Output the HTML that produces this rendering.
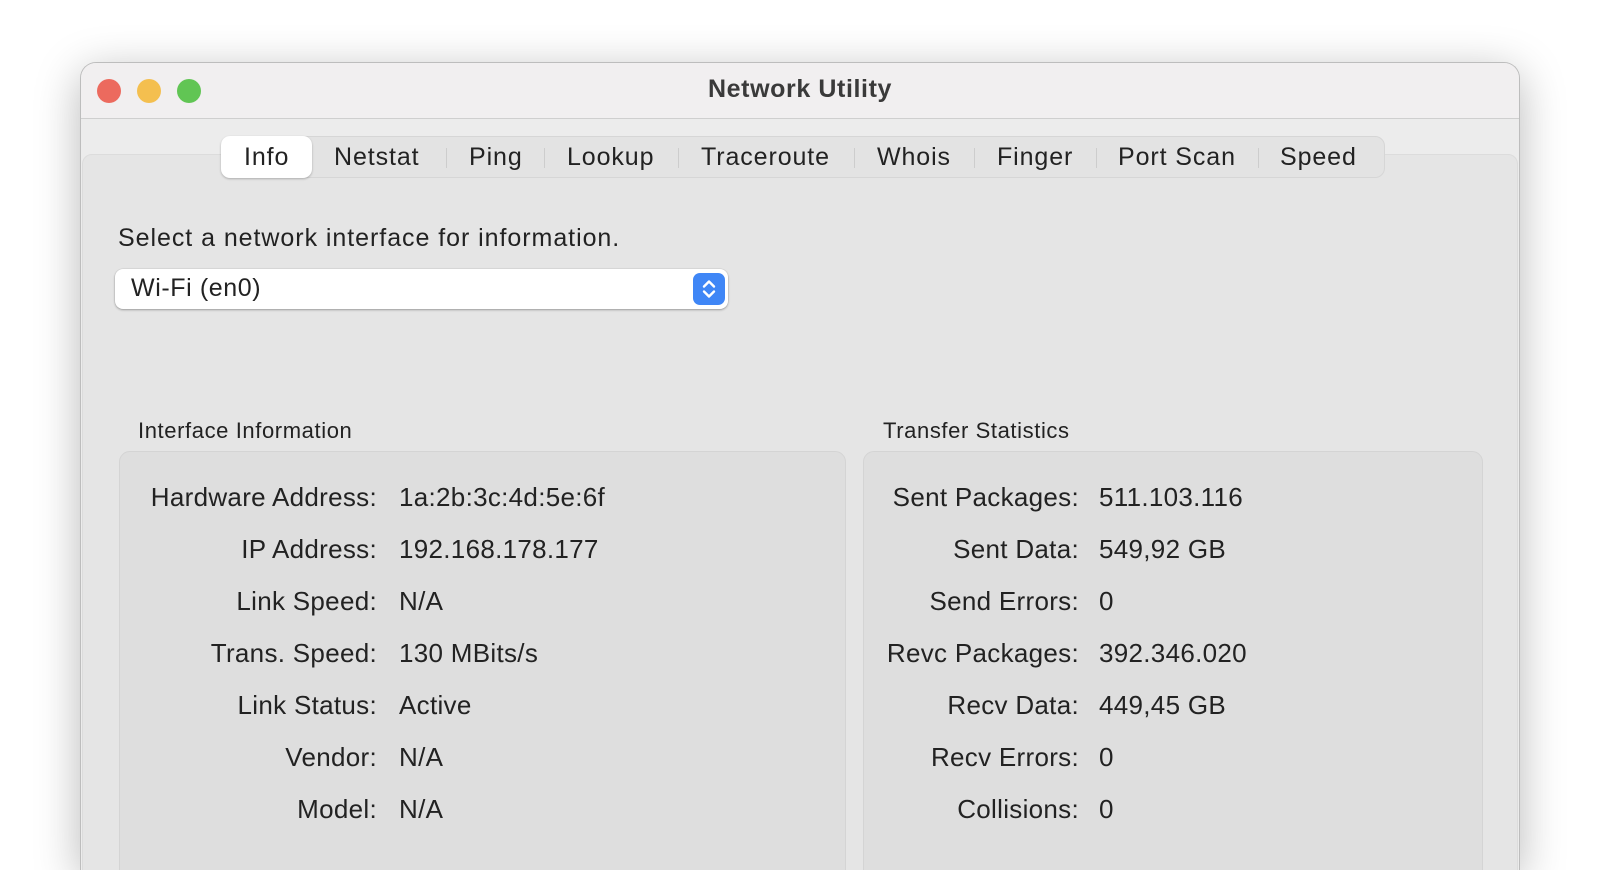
<!DOCTYPE html>
<html><head><meta charset="utf-8"><style>
*{margin:0;padding:0;box-sizing:border-box}
html,body{width:1600px;height:870px;overflow:hidden}
body{background:#fff;font-family:"Liberation Sans",sans-serif;color:#222;position:relative}
.win{position:absolute;left:80px;top:62px;width:1440px;height:808px;border-radius:16px 16px 0 0;background:#ececec;border:1px solid #bdbdbd;border-bottom:none;box-shadow:0 10px 45px rgba(0,0,0,.28);overflow:hidden}
.tb{position:absolute;left:0;top:0;right:0;height:56px;background:#f1eff0;border-bottom:1px solid #cfcfcf}
.dot{position:absolute;top:16px;width:24px;height:24px;border-radius:50%}
.title{position:absolute;left:0;right:0;top:12px;text-align:center;font-weight:bold;font-size:25px;letter-spacing:.6px;color:#3a3a3a}
.tv{position:absolute;left:1px;right:1px;top:91px;bottom:-20px;background:#e5e5e5;border:1px solid #dcdcdc;border-radius:10px}
.tabs{position:absolute;left:140px;top:73px;width:1164px;height:42px;background:#e3e3e3;border:1px solid #d6d6d6;border-radius:10px}
.tab{position:absolute;top:6px;font-size:25px;letter-spacing:.9px;white-space:nowrap}
.sep{position:absolute;top:11px;width:1px;height:20px;background:#cdcdcd}
.info{position:absolute;left:-1px;top:-1px;width:91px;height:42px;background:#fff;border-radius:9px;box-shadow:0 1px 2px rgba(0,0,0,.25)}
.t{position:absolute;white-space:nowrap}
.pop{position:absolute;left:34px;top:206px;width:613px;height:40px;background:#fff;border-radius:8px;box-shadow:0 1px 2px rgba(0,0,0,.3),0 0 0 .5px rgba(0,0,0,.08)}
.btn{position:absolute;left:578px;top:4px;width:32px;height:32px;border-radius:7px;background:#3f86f6}
.grp{position:absolute;top:388px;height:520px;background:#dedede;border:1px solid #d4d4d4;border-radius:11px}
.row{position:absolute;font-size:26px;letter-spacing:.3px;white-space:nowrap}
.lab{text-align:right}
</style></head><body>
<div class="win">
 <div class="tb">
  <div class="dot" style="left:16px;background:#ec6a5e"></div>
  <div class="dot" style="left:56px;background:#f4bf4f"></div>
  <div class="dot" style="left:96px;background:#61c554"></div>
  <div class="title">Network Utility</div>
 </div>
 <div class="tv"></div>
 <div class="tabs">
  <div class="info"></div>
  <div class="tab" style="left:22px">Info</div>
  <div class="tab" style="left:112px">Netstat</div>
  <div class="sep" style="left:224px"></div>
  <div class="tab" style="left:247px">Ping</div>
  <div class="sep" style="left:322px"></div>
  <div class="tab" style="left:345px">Lookup</div>
  <div class="sep" style="left:456px"></div>
  <div class="tab" style="left:479px">Traceroute</div>
  <div class="sep" style="left:632px"></div>
  <div class="tab" style="left:655px">Whois</div>
  <div class="sep" style="left:752px"></div>
  <div class="tab" style="left:775px">Finger</div>
  <div class="sep" style="left:874px"></div>
  <div class="tab" style="left:896px">Port Scan</div>
  <div class="sep" style="left:1036px"></div>
  <div class="tab" style="left:1058px">Speed</div>
 </div>
 <div class="t" style="left:37px;top:161px;font-size:25px;letter-spacing:.95px">Select a network interface for information.</div>
 <div class="pop">
  <div class="t" style="left:16px;top:5px;font-size:25px;letter-spacing:.6px">Wi-Fi (en0)</div>
  <div class="btn"><svg width="32" height="32" viewBox="0 0 32 32"><path d="M11 13.5l5-5 5 5M11 18.5l5 5 5-5" fill="none" stroke="#fff" stroke-width="2.4" stroke-linecap="round" stroke-linejoin="round"/></svg></div>
 </div>
 <div class="t" style="left:57px;top:355px;font-size:22px;letter-spacing:.6px">Interface Information</div>
 <div class="t" style="left:802px;top:355px;font-size:22px;letter-spacing:.6px">Transfer Statistics</div>
 <div class="grp" style="left:38px;width:727px"></div>
 <div class="grp" style="left:782px;width:620px"></div>

 <div class="row lab" style="right:1142px;top:419px">Hardware Address:</div><div class="row" style="left:318px;top:419px">1a:2b:3c:4d:5e:6f</div>
 <div class="row lab" style="right:1142px;top:471px">IP Address:</div><div class="row" style="left:318px;top:471px">192.168.178.177</div>
 <div class="row lab" style="right:1142px;top:523px">Link Speed:</div><div class="row" style="left:318px;top:523px">N/A</div>
 <div class="row lab" style="right:1142px;top:575px">Trans. Speed:</div><div class="row" style="left:318px;top:575px">130 MBits/s</div>
 <div class="row lab" style="right:1142px;top:627px">Link Status:</div><div class="row" style="left:318px;top:627px">Active</div>
 <div class="row lab" style="right:1142px;top:679px">Vendor:</div><div class="row" style="left:318px;top:679px">N/A</div>
 <div class="row lab" style="right:1142px;top:731px">Model:</div><div class="row" style="left:318px;top:731px">N/A</div>

 <div class="row lab" style="right:440px;top:419px">Sent Packages:</div><div class="row" style="left:1018px;top:419px">511.103.116</div>
 <div class="row lab" style="right:440px;top:471px">Sent Data:</div><div class="row" style="left:1018px;top:471px">549,92 GB</div>
 <div class="row lab" style="right:440px;top:523px">Send Errors:</div><div class="row" style="left:1018px;top:523px">0</div>
 <div class="row lab" style="right:440px;top:575px">Revc Packages:</div><div class="row" style="left:1018px;top:575px">392.346.020</div>
 <div class="row lab" style="right:440px;top:627px">Recv Data:</div><div class="row" style="left:1018px;top:627px">449,45 GB</div>
 <div class="row lab" style="right:440px;top:679px">Recv Errors:</div><div class="row" style="left:1018px;top:679px">0</div>
 <div class="row lab" style="right:440px;top:731px">Collisions:</div><div class="row" style="left:1018px;top:731px">0</div>
</div>
</body></html>
